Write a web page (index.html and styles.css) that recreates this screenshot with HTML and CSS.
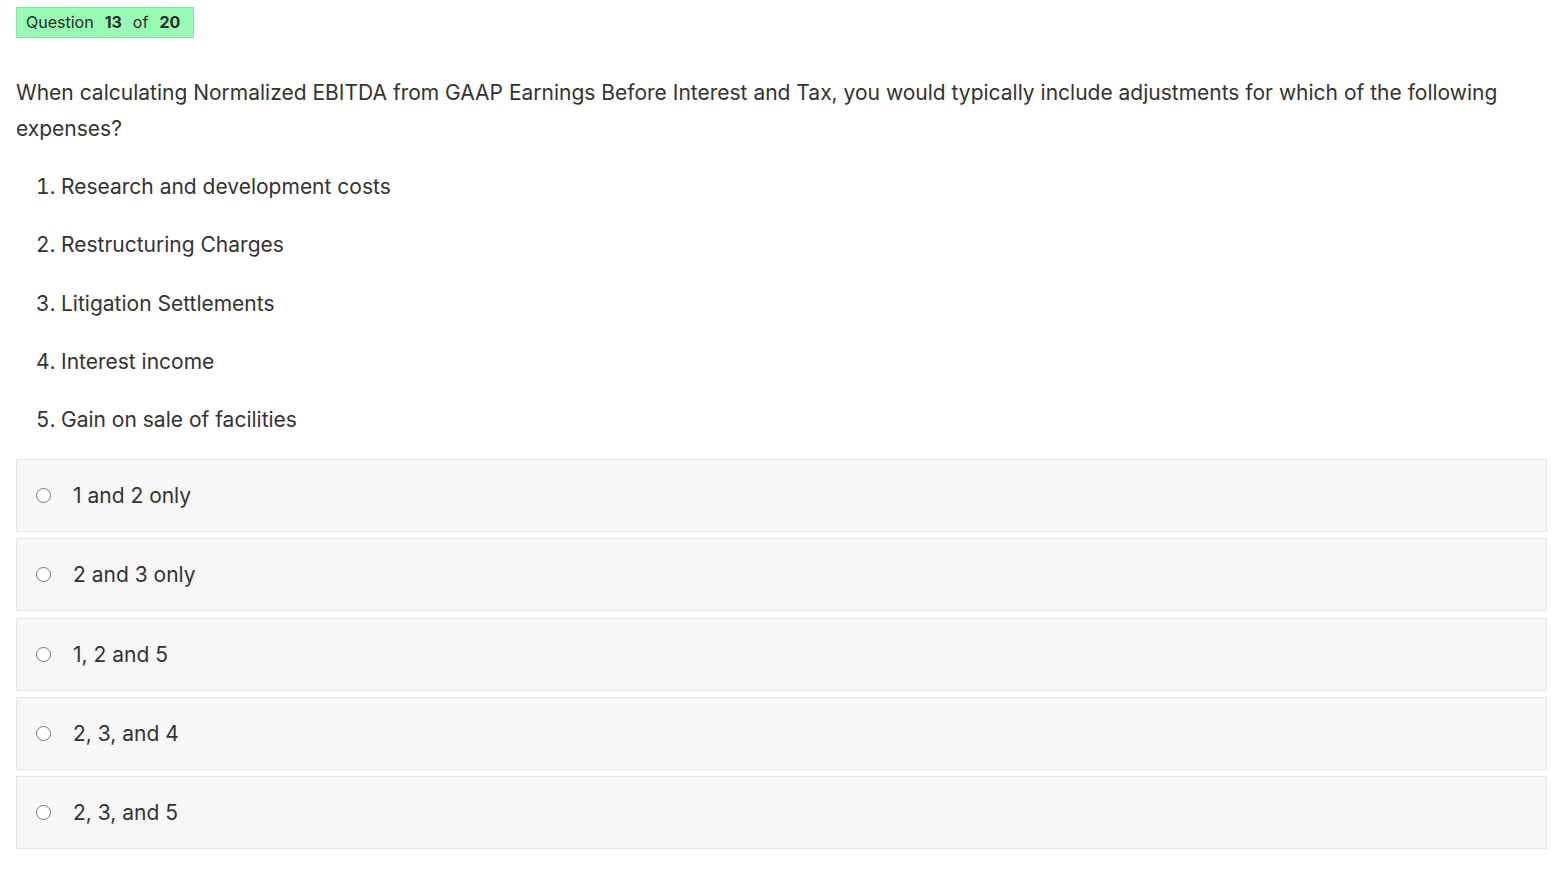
FILE: index.html
```html
<!DOCTYPE html>
<html>
<head>
<meta charset="utf-8">
<link rel="stylesheet" href="styles.css">
</head>
<body>
<div class="page">
  <div class="badge">Question <b>13</b> of <b>20</b></div>
  <p class="question">When calculating Normalized EBITDA from GAAP Earnings Before Interest and Tax, you would typically include adjustments for which of the following expenses?</p>
  <ol class="items">
    <li>Research and development costs</li>
    <li>Restructuring Charges</li>
    <li>Litigation Settlements</li>
    <li>Interest income</li>
    <li>Gain on sale of facilities</li>
  </ol>
  <div class="options">
    <label class="option"><input type="radio" name="a"><span>1 and 2 only</span></label>
    <label class="option"><input type="radio" name="a"><span>2 and 3 only</span></label>
    <label class="option"><input type="radio" name="a"><span>1, 2 and 5</span></label>
    <label class="option"><input type="radio" name="a"><span>2, 3, and 4</span></label>
    <label class="option"><input type="radio" name="a"><span>2, 3, and 5</span></label>
  </div>
</div>
</body>
</html>
```
FILE: styles.css
```css
html, body {
  margin: 0;
  padding: 0;
  background: #fff;
}
body {
  font-family: Inter, "Noto Sans", sans-serif;
  color: #333;
}
.page {
  padding: 7px 17px 0 16px;
}
.badge {
  display: inline-block;
  box-sizing: border-box;
  height: 31px;
  line-height: 29px;
  padding: 0 13px 0 9px;
  background: #99fcb4;
  border: 1px solid #8ee0a4;
  font-size: 16px;
  word-spacing: 6.5px;
  color: #2b2b2b;
}
.badge b {
  font-weight: 700;
}
.question {
  margin: 37px 0 0 0;
  font-size: 21px;
  line-height: 36px;
}
.items {
  margin: 25px 0 0 0;
  padding: 0 0 0 45px;
  font-size: 21px;
  line-height: 30px;
}
.items li {
  margin-bottom: 28.25px;
}
.items li:last-child {
  margin-bottom: 0;
}
.options {
  margin-top: 24px;
  display: flex;
  flex-direction: column;
  gap: 6.25px;
}
.option {
  box-sizing: border-box;
  height: 73px;
  display: flex;
  align-items: center;
  background: #f7f7f7;
  border: 1px solid #e6e6e6;
  padding-left: 19px;
  font-size: 21px;
}
.option input {
  margin: 0;
  width: 15px;
  height: 15px;
  appearance: none;
  -webkit-appearance: none;
  border: 1px solid #777;
  border-radius: 50%;
  background: #fff;
}
.option span {
  margin-left: 22px;
}
```
